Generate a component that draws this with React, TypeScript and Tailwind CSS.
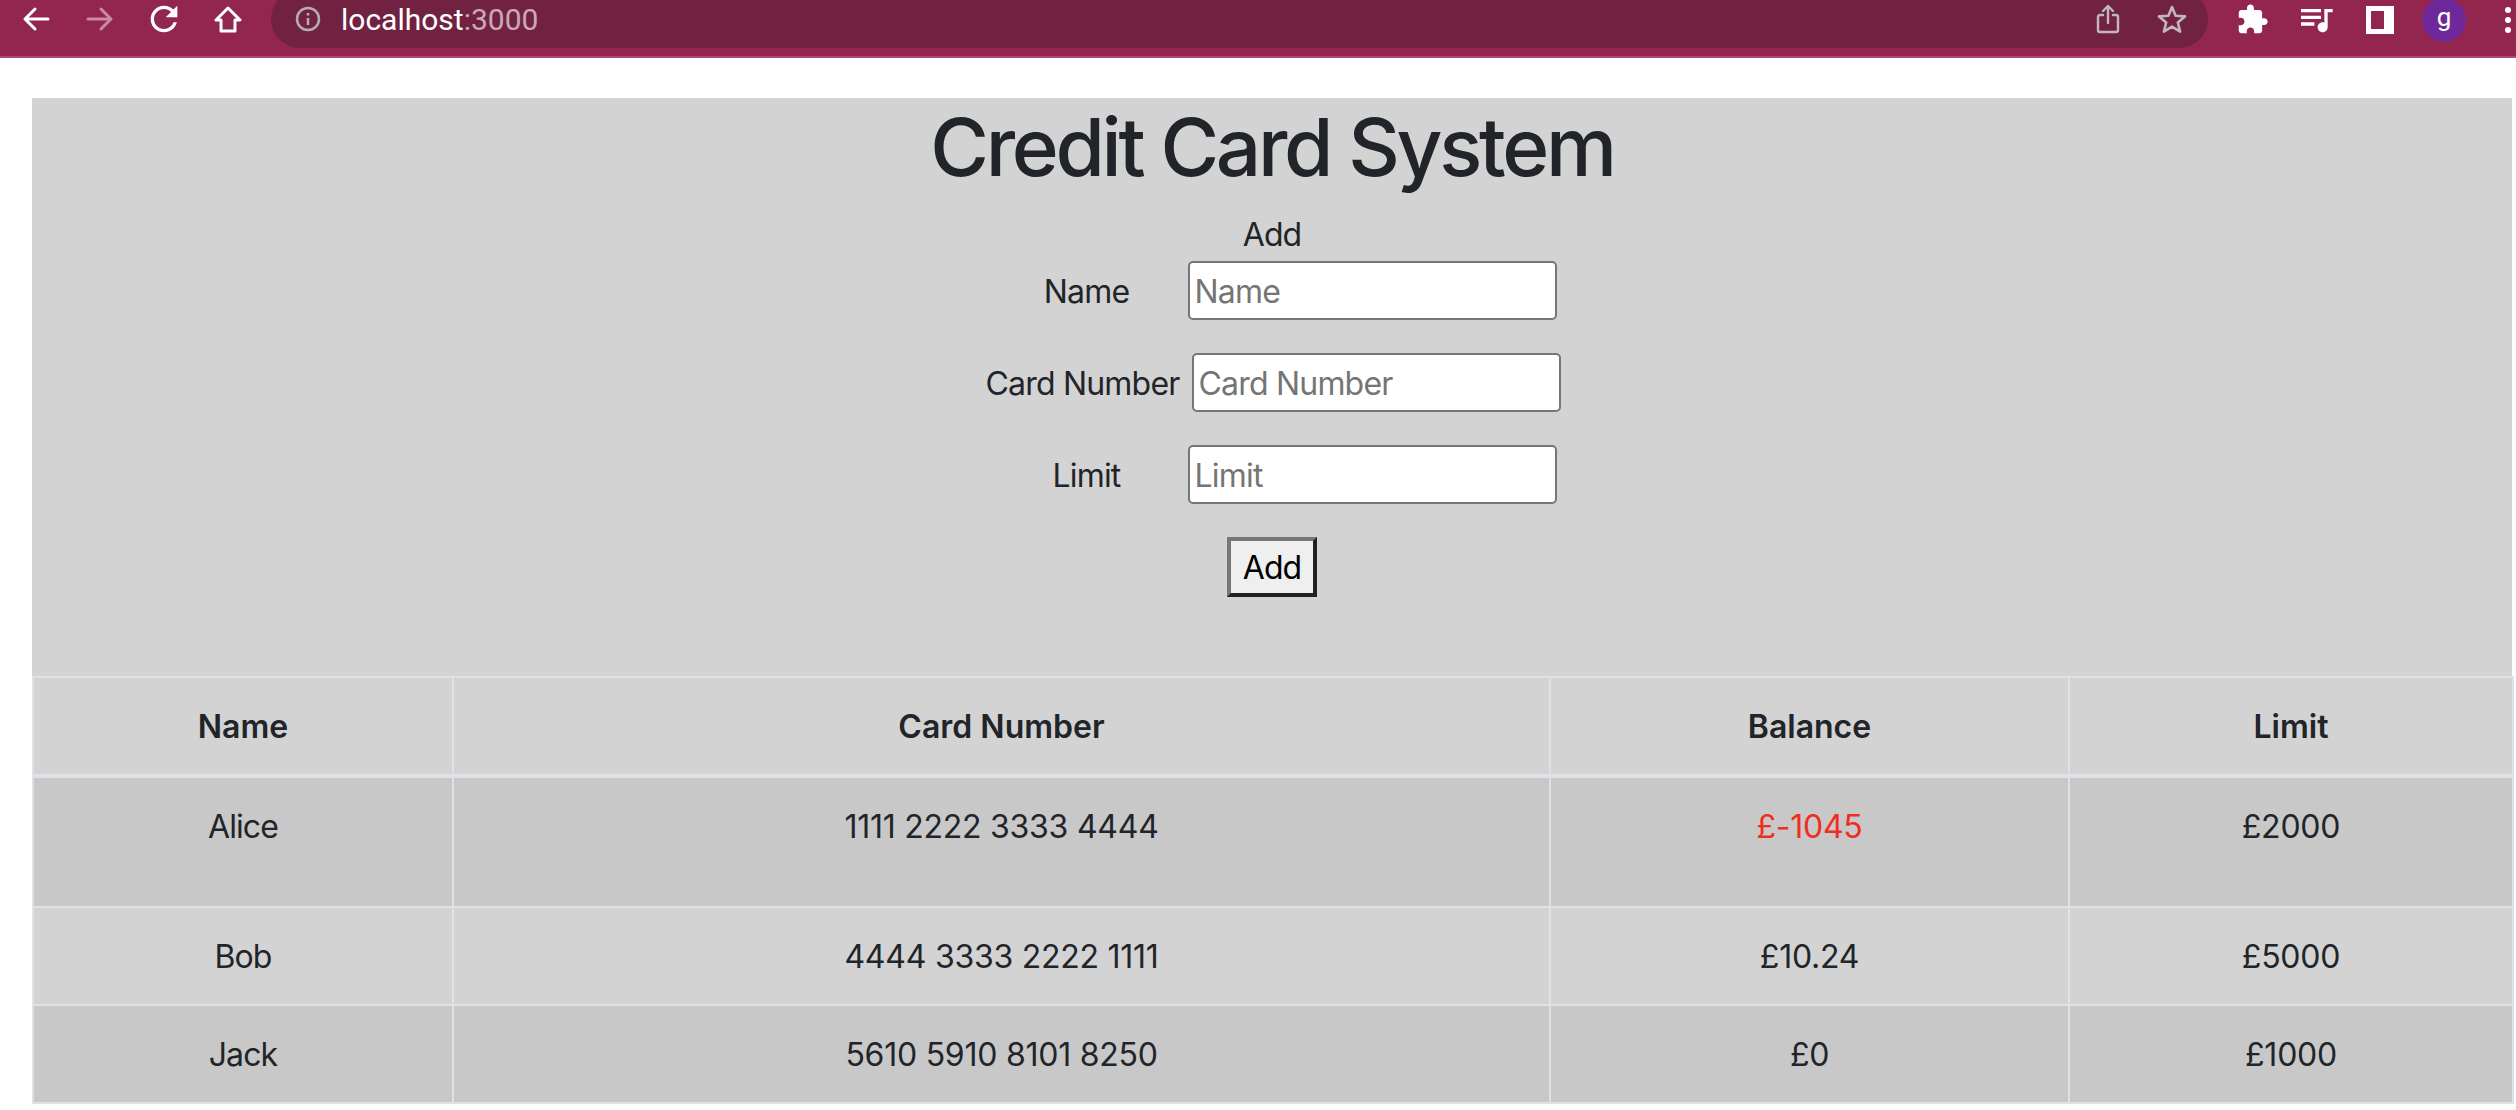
const rows = [
  { name: "Alice", card: "1111 2222 3333 4444", balance: "£-1045", limit: "£2000", over: true },
  { name: "Bob", card: "4444 3333 2222 1111", balance: "£10.24", limit: "£5000", over: false },
  { name: "Jack", card: "5610 5910 8101 8250", balance: "£0", limit: "£1000", over: false },
]

function BrowserBar() {
  return (
    <div className="h-[58px] overflow-hidden border-b-2 border-[#a94c70] bg-[#93264f] [font-family:Roboto,sans-serif]">
      <div className="-mr-6 flex h-[56px] items-start pl-1">
        <div className="flex h-[38px] w-16 items-center justify-center">
          <svg viewBox="0 0 28 26" className="h-[26px] w-[28px]" fill="none" stroke="#fff" strokeWidth="3" strokeLinecap="round" strokeLinejoin="round">
            <path d="M26 13H3M13 3 3 13l10 10" />
          </svg>
        </div>
        <div className="flex h-[38px] w-16 items-center justify-center">
          <svg viewBox="0 0 28 26" className="h-[26px] w-[28px]" fill="none" stroke="#c98aa3" strokeWidth="3" strokeLinecap="round" strokeLinejoin="round">
            <path d="M2 13h23M15 3l10 10-10 10" />
          </svg>
        </div>
        <div className="flex h-[38px] w-16 items-center justify-center">
          <svg viewBox="0 0 24 24" className="h-[40px] w-[40px]" fill="#fff">
            <path d="M17.65 6.35C16.2 4.9 14.21 4 12 4c-4.42 0-7.99 3.58-7.99 8s3.57 8 7.99 8c3.73 0 6.84-2.55 7.73-6h-2.08c-.82 2.33-3.04 4-5.65 4-3.31 0-6-2.69-6-6s2.69-6 6-6c1.66 0 3.14.69 4.22 1.78L13 11h7V4l-2.35 2.35z" />
          </svg>
        </div>
        <div className="flex h-[38px] w-16 items-center justify-center">
          <svg viewBox="0 0 28 27" className="h-[27px] w-[28px]" fill="none" stroke="#fff" strokeWidth="3" strokeLinejoin="round">
            <path d="M14 2 26 14h-5v11H7V14H2z" />
          </svg>
        </div>
        <div className="ml-[11px] mr-3 -mt-[10px] flex h-[58px] flex-1 items-center rounded-full bg-[#722241]">
          <svg viewBox="0 0 26 26" className="ml-6 h-[26px] w-[26px]" fill="none" stroke="#b4aeb1" strokeWidth="2.5">
            <circle cx="13" cy="13" r="11" />
            <path d="M13 12v7M13 7v2.5" />
          </svg>
          <div className="ml-[20px] mt-[2px] text-[30px] leading-[38px] text-white">
            localhost<span className="text-[#c9a9b7]">:3000</span>
          </div>
          <svg viewBox="0 0 24 30" className="ml-auto h-[30px] w-[24px]" fill="none" stroke="#c0b8bc" strokeWidth="2.4" strokeLinecap="round" strokeLinejoin="round">
            <path d="M7 11H4a2 2 0 0 0-2 2v13a2 2 0 0 0 2 2h16a2 2 0 0 0 2-2V13a2 2 0 0 0-2-2h-3M12 19V2M7 7l5-5 5 5" />
          </svg>
          <svg viewBox="0 0 30 28" className="ml-[37px] mr-[21px] h-[28px] w-[30px]" fill="none" stroke="#c0b8bc" strokeWidth="2.6" strokeLinejoin="round">
            <path d="m15 2 3.6 8.7 9.4.7-7.2 6.1 2.3 9.1-8.100-5-8.100 5 2.300-9.100L2 11.400l9.400-.7z" />
          </svg>
        </div>
        <div className="flex h-[38px] w-16 items-center justify-center">
          <svg viewBox="0 0 24 24" className="h-[33px] w-[33px]" fill="#fff">
            <path d="M20.5 11H19V7c0-1.100-.9-2-2-2h-4V3.500C13 2.120 11.880 1 10.500 1S8 2.120 8 3.500V5H4c-1.100 0-1.990.9-1.990 2v3.800H3.500c1.490 0 2.700 1.210 2.700 2.700s-1.210 2.700-2.700 2.700H2V20c0 1.100.9 2 2 2h3.800v-1.500c0-1.490 1.210-2.700 2.700-2.700 1.490 0 2.700 1.210 2.700 2.700V22H17c1.100 0 2-.9 2-2v-4h1.500c1.380 0 2.500-1.120 2.500-2.500S21.880 11 20.500 11z" />
          </svg>
        </div>
        <div className="flex h-[38px] w-16 items-center justify-center">
          <svg viewBox="0 0 24 24" className="h-[40px] w-[40px]" fill="#fff">
            <path d="M15 6H3v2h12V6zm0 4H3v2h12v-2zM3 16h8v-2H3v2zM17 6v8.180c-.31-.11-.65-.18-1-.18-1.660 0-3 1.340-3 3s1.340 3 3 3 3-1.340 3-3V8h3V6h-5z" />
          </svg>
        </div>
        <div className="flex h-[40px] w-16 items-center justify-center">
          <div className="h-[28px] w-[28px] border-[5px] border-r-[10px] border-white" />
        </div>
        <div className="flex h-[40px] w-16 items-center justify-center">
          <div className="flex h-[44px] w-[44px] shrink-0 items-center justify-center rounded-full bg-[#6f2899] pb-[6px] text-[26px] text-white">
            g
          </div>
        </div>
        <div className="flex h-[40px] w-16 flex-col items-center justify-center gap-[4px]">
          <div className="h-[6px] w-[6px] rounded-full bg-white" />
          <div className="h-[6px] w-[6px] rounded-full bg-white" />
          <div className="h-[6px] w-[6px] rounded-full bg-white" />
        </div>
      </div>
    </div>
  )
}

function Field({ label, spaced }: { label: string; spaced?: boolean }) {
  return (
    <div className={`flex items-center justify-center ${spaced ? "gap-2" : ""}`}>
      <label className="w-[200px] whitespace-nowrap pr-[2px] pt-[2px] text-center tracking-[-0.8px]">{label}</label>
      <input
        placeholder={label}
        className="h-[59px] w-[369px] rounded-[5px] border-2 border-[#767676] bg-white pl-[5px] pr-2 pt-[2px] text-[32px] tracking-[-0.8px] placeholder:text-[#757575]"
      />
    </div>
  )
}

export default function App() {
  return (
    <div className="min-h-screen bg-white text-[32px] leading-[48px] text-[#212529] [font-family:Inter,sans-serif]">
      <BrowserBar />
      <div className="ml-8 mr-1 mt-10 bg-[#d3d3d3]">
        <h1 className="mb-[17px] pt-[2px] text-center text-[80px] font-medium leading-[94px] tracking-[-3.3px]">Credit Card System</h1>
        <div className="text-center tracking-[-0.9px]">Add</div>
        <div className="mt-[2px] flex flex-col gap-[33px]">
          <Field label="Name" />
          <Field label="Card Number" spaced />
          <Field label="Limit" />
          <div className="flex justify-center">
            <button className="h-[60px] w-[90px] border-4 border-b-[#212121] border-l-[#767676] border-r-[#212121] border-t-[#767676] bg-[#efefef] pt-[2px] tracking-[-0.9px] text-black">
              Add
            </button>
          </div>
        </div>
        <table className="mt-[79px] w-full table-fixed border-collapse text-center">
          <colgroup>
            <col className="w-[420px]" />
            <col className="w-[1097px]" />
            <col className="w-[519px]" />
            <col className="w-[444px]" />
          </colgroup>
          <thead>
            <tr>
              <th className="border-2 border-b-4 border-[#dee2e6] px-6 pb-[23px] pt-[25px] font-semibold">Name</th>
              <th className="border-2 border-b-4 border-[#dee2e6] px-6 pb-[23px] pt-[25px] font-semibold">Card Number</th>
              <th className="border-2 border-b-4 border-[#dee2e6] px-6 pb-[23px] pt-[25px] font-semibold">Balance</th>
              <th className="border-2 border-b-4 border-[#dee2e6] px-6 pb-[23px] pt-[25px] font-semibold">Limit</th>
            </tr>
          </thead>
          <tbody>
            {rows.map((row, i) => (
              <tr key={row.name} className={i % 2 === 0 ? "bg-[#c8c8c8]" : ""}>
                <td className={`border-2 border-[#dee2e6] px-6 pt-[25px] tracking-[-0.9px] ${row.over ? "pb-[55px]" : "pb-[23px]"} align-top`}>{row.name}</td>
                <td className={`border-2 border-[#dee2e6] px-6 pt-[25px] tracking-[-0.25px] ${row.over ? "pb-[55px]" : "pb-[23px]"} align-top`}>{row.card}</td>
                <td className={`border-2 border-[#dee2e6] px-6 pt-[25px] tracking-[-0.25px] ${row.over ? "pb-[55px] text-[#f02d1f]" : "pb-[23px]"} align-top`}>{row.balance}</td>
                <td className={`border-2 border-[#dee2e6] px-6 pt-[25px] tracking-[-0.25px] ${row.over ? "pb-[55px]" : "pb-[23px]"} align-top`}>{row.limit}</td>
              </tr>
            ))}
          </tbody>
        </table>
      </div>
    </div>
  )
}
